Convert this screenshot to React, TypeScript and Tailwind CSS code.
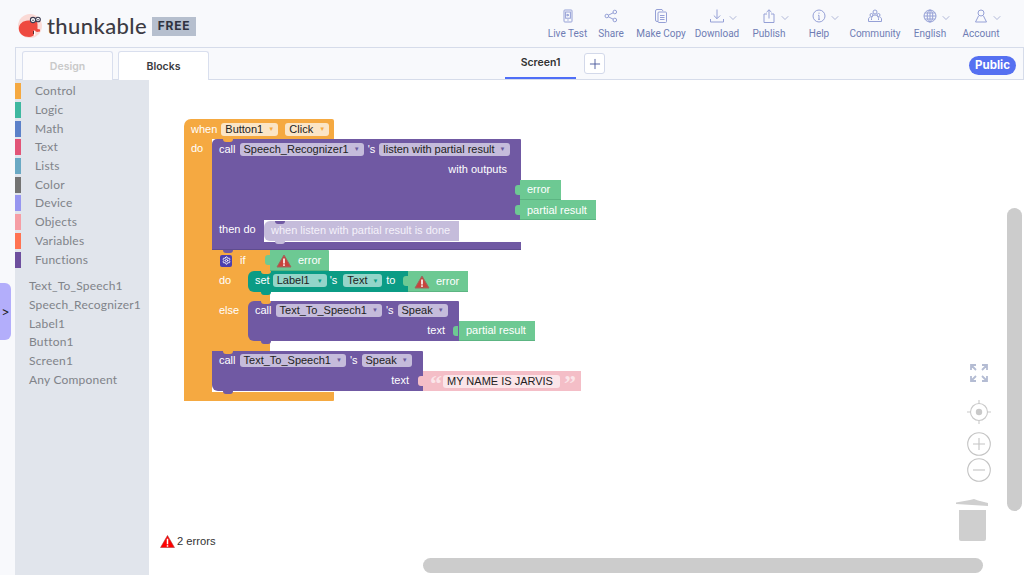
import { ChevronDown, Plus, Settings } from "lucide-react";
import type { ReactNode } from "react";

const navIcons: Record<string, ReactNode> = {
  "Live Test": (
    <>
      <rect x="3" y="1" width="8" height="12" rx="0.8" />
      <rect x="4.6" y="3" width="4.8" height="6.2" />
      <path d="M6 5.200l2 .9-2 .9zM6.300 11h1.400" />
    </>
  ),
  Share: (
    <>
      <circle cx="2.800" cy="7" r="1.800" />
      <circle cx="10.800" cy="3" r="1.800" />
      <circle cx="10.800" cy="11" r="1.800" />
      <path d="m4.400 6.200 4.800-2.400M4.400 7.800l4.800 2.400" />
    </>
  ),
  "Make Copy": (
    <>
      <path d="M4 12.500H3a1.500 1.500 0 0 1-1.500-1.500V2A1.500 1.500 0 0 1 3 .5h5l1 1.500" />
      <rect x="4" y="3" width="8.500" height="10.500" rx="1" />
      <path d="M6 6.500h4.500M6 8.500h4.500M6 10.500h4.500" />
    </>
  ),
  Download: <path d="M7 .5v9M3.800 6.500 7 9.700l3.200-3.200M.5 10v3h13v-3" />,
  Publish: <path d="M7 9.500V.8M4.500 3.200 7 .8l2.500 2.400M5 5H2v8.500h10V5H9" />,
  Help: (
    <>
      <circle cx="7" cy="7" r="6" />
      <path d="M7 6.300v4M6 6.300h1M6 10.300h2M7 3.600v1.200" />
    </>
  ),
  Community: (
    <>
      <circle cx="7" cy="3" r="2" />
      <circle cx="3.500" cy="6" r="1.500" />
      <circle cx="10.500" cy="6" r="1.500" />
      <path d="M3.500 11V9.500c0-2 1.500-3.500 3.500-3.500s3.500 1.500 3.500 3.500V11M.5 12.500V10c0-1 1-2 2-2M13.500 12.500V10c0-1-1-2-2-2M.5 12.500h13" />
    </>
  ),
  English: (
    <>
      <circle cx="7" cy="7" r="6" />
      <ellipse cx="7" cy="7" rx="2.800" ry="6" />
      <path d="M7 1v12M1 7h12M1.800 4h10.400M1.800 10h10.400" />
    </>
  ),
  Account: (
    <>
      <circle cx="7" cy="4" r="3" />
      <path d="M4.500 7 1.500 13h11l-3-6" />
    </>
  ),
};

const navItems = [
  { label: "Live Test", width: "w-[39px]" },
  { label: "Share", width: "w-[48px]" },
  { label: "Make Copy", width: "w-[52px]" },
  { label: "Download", width: "w-[60px]", menu: true },
  { label: "Publish", width: "w-[44px]", menu: true },
  { label: "Help", width: "w-[56px]", menu: true },
  { label: "Community", width: "w-[56px]" },
  { label: "English", width: "w-[54px]", menu: true },
  { label: "Account", width: "w-[48px]", menu: true },
];

const categories = [
  { name: "Control", color: "bg-[#f5a941]" },
  { name: "Logic", color: "bg-[#3fb8a0]" },
  { name: "Math", color: "bg-[#5c81c9]" },
  { name: "Text", color: "bg-[#e25578]" },
  { name: "Lists", color: "bg-[#6aa9c4]" },
  { name: "Color", color: "bg-[#737373]" },
  { name: "Device", color: "bg-[#9796f0]" },
  { name: "Objects", color: "bg-[#f69ea5]" },
  { name: "Variables", color: "bg-[#ff7352]" },
  { name: "Functions", color: "bg-[#6e4f9e]" },
];

const components = ["Text_To_Speech1", "Speech_Recognizer1", "Label1", "Button1", "Screen1", "Any Component"];

function Logo() {
  return (
    <svg width="24" height="24" viewBox="0 0 24 24">
      <circle cx="12" cy="12" r="12" fill="#fadad6" />
      <path d="M.8 15C.8 10 5 6.500 10 6.500h6c2 0 3.500 1.500 3.500 4v4.500l2.500.5v2l-3 .5-2-1v2.500c-1 2-3 3.500-6 3.500-5.500 0-10.200-3.500-10.200-8.500z" fill="#ee4a40" />
      <path d="M16.500 16.500v5" stroke="#fff" strokeWidth="1.400" />
      <path d="M15.500 17v3" stroke="#5a2a2a" strokeWidth="1" />
      <circle cx="15" cy="6" r="2.600" fill="#fff" stroke="#3a3a50" strokeWidth="1.100" />
      <circle cx="20" cy="5.500" r="2.300" fill="#fff" stroke="#3a3a50" strokeWidth="1.100" />
      <circle cx="15" cy="6.200" r="0.800" fill="#3a3a50" />
      <circle cx="20" cy="5.700" r="0.800" fill="#3a3a50" />
    </svg>
  );
}

function Warning() {
  return (
    <svg viewBox="0 0 16 14" className="h-[14px] w-[16px] shrink-0">
      <path d="M8 1 15 13H1z" fill="#c9433c" stroke="#9a6a60" strokeWidth="1" strokeLinejoin="round" />
      <rect x="7.200" y="4.500" width="1.600" height="5" fill="#fff" />
      <rect x="7.200" y="10.300" width="1.600" height="1.600" fill="#fff" />
    </svg>
  );
}

function Field({ children, tone, arrow = true, className = "" }: { children: ReactNode; tone: "purple" | "orange" | "teal" | "pink"; arrow?: boolean; className?: string }) {
  const bg = { purple: "bg-[#c5bcdb]", orange: "bg-[#fbe5c6]", teal: "bg-[#93d5c9]", pink: "bg-[#fbe5e9]" }[tone];
  const arrowColor = { purple: "text-[#6a5a9c]", orange: "text-[#f5a941]", teal: "text-[#0b9c85]", pink: "" }[tone];
  return (
    <span className={`flex h-[13px] items-center justify-between gap-[5px] rounded-[3px] px-[4px] text-[#222] ${bg} ${className}`}>
      {children}
      {arrow && <span className={`text-[6px] leading-none ${arrowColor}`}>▼</span>}
    </span>
  );
}

// little tab on the left edge of a value block
function Tab({ className }: { className: string }) {
  return <span className={`absolute h-[10px] w-[5px] rounded-l-[3px] ${className}`} />;
}

// bump hanging under a statement block
function Bump({ className }: { className: string }) {
  return <span className={`absolute h-[3px] w-[10px] rounded-b-[5px] ${className}`} />;
}

function Blocks() {
  return (
    <div className="font-['Liberation_Sans',sans-serif] text-[11px] leading-none text-white">
      {/* when Button1 Click */}
      <div className="absolute left-[35px] top-[39px] flex h-[20px] w-[150px] items-center gap-[4px] rounded-t-[7px] rounded-tr-[2px] bg-[#f5a941] pl-[7px]">
        when
        <Field tone="orange" className="w-[57px]">Button1</Field>
        <Field tone="orange" className="ml-[3px] w-[44px]">Click</Field>
      </div>
      <div className="absolute left-[35px] top-[59px] h-[262px] w-[28px] bg-[#f5a941] pl-[7px] pt-[4px]">do</div>
      <div className="absolute left-[35px] top-[312px] h-[9px] w-[150px] rounded-b-[7px] rounded-br-[1px] bg-[#f5a941]" />

      {/* call Speech_Recognizer1 */}
      <div className="absolute left-[63px] top-[59px] h-[81px] w-[309px] rounded-tl-[5px] rounded-tr-[1px] bg-[#7059a3]">
        <div className="flex h-[20px] items-center gap-[4px] pl-[7px]">
          call
          <Field tone="purple">Speech_Recognizer1</Field>
          's
          <Field tone="purple">listen with partial result</Field>
        </div>
        <div className="pr-[14px] text-right leading-[20px]">with outputs</div>
      </div>
      <Bump className="left-[74px] top-[59px] bg-[#f5a941]" />
      <div className="absolute left-[63px] top-[140px] flex h-[22px] w-[52px] items-start bg-[#7059a3] pl-[7px] pt-[4px]">then&nbsp;do</div>
      <div className="absolute left-[63px] top-[162px] h-[8px] w-[309px] bg-[#7059a3] shadow-[inset_0_-1px_0_#5f4c8e]" />
      <div className="absolute left-[115px] top-[141px] flex h-[20px] w-[195px] items-center rounded-l-[6px] bg-[#c5bcdb] pb-[2px] pl-[7px] text-[#f4f1fa]">
        when listen with partial result is done
      </div>
      <Bump className="left-[126px] top-[141px] bg-[#7059a3]" />
      <Bump className="left-[126px] top-[161px] bg-[#c5bcdb]" />

      <div className="absolute left-[371px] top-[100px] flex h-[20px] w-[41px] items-center bg-[#6dc993] pb-[2px] pl-[7px] shadow-[inset_0_-1px_0_#5cb582]">error</div>
      <Tab className="left-[366px] top-[105px] bg-[#6dc993]" />
      <div className="absolute left-[371px] top-[120px] flex h-[20px] w-[76px] items-center bg-[#6dc993] pl-[7px] shadow-[inset_0_-1px_0_#5cb582]">partial result</div>
      <Tab className="left-[366px] top-[125px] bg-[#6dc993]" />

      {/* if / do / else */}
      <div className="absolute left-[63px] top-[170px] h-[101px] w-[58px] bg-[#f5a941]">
        <div className="flex h-[21px] items-center gap-[8px] pl-[8px]">
          <span className="flex h-[12px] w-[12px] items-center justify-center rounded-[2px] bg-[#4b3fb0]">
            <Settings className="h-[9px] w-[9px] text-white" strokeWidth={2.5} />
          </span>
          if
        </div>
        <div className="mt-[2px] pl-[7px] leading-[14px]">do</div>
        <div className="mt-[16px] pl-[7px] leading-[14px]">else</div>
      </div>
      <Bump className="left-[74px] top-[170px] bg-[#7059a3]" />
      <div className="absolute left-[121px] top-[170px] flex h-[21px] w-[59px] items-center gap-[6px] rounded-tr-[1px] bg-[#6dc993] pl-[6px] shadow-[inset_0_-1px_0_#5cb582]">
        <Warning />
        error
      </div>
      <Tab className="left-[116px] top-[175px] bg-[#6dc993]" />

      {/* set Label1's Text to error */}
      <div className="absolute left-[99px] top-[191px] flex h-[21px] w-[160px] items-center gap-[3px] rounded-l-[6px] bg-[#0b9c85] pb-[2px] pl-[7px]">
        set
        <Field tone="teal" className="w-[54px]">Label1</Field>
        <span className="mr-[3px]">'s</span>
        <Field tone="teal" className="w-[39px]">Text</Field>
        <span className="ml-px">to</span>
      </div>
      <Bump className="left-[112px] top-[191px] bg-[#f5a941]" />
      <Bump className="left-[112px] top-[212px] bg-[#0b9c85]" />
      <div className="absolute left-[259px] top-[191px] flex h-[21px] w-[60px] items-center gap-[6px] bg-[#6dc993] pl-[6px] shadow-[inset_0_-1px_0_#5cb582]">
        <Warning />
        error
      </div>
      <Tab className="left-[254px] top-[196px] bg-[#6dc993]" />

      {/* call Text_To_Speech1 Speak */}
      <div className="absolute left-[99px] top-[221px] h-[40px] w-[211px] rounded-l-[6px] rounded-tr-[1px] bg-[#7059a3]">
        <div className="flex h-[20px] items-center gap-[4px] pb-[2px] pl-[7px]">
          call
          <Field tone="purple">Text_To_Speech1</Field>
          <span>'s</span>
          <Field tone="purple">Speak</Field>
        </div>
        <div className="pr-[14px] text-right leading-[18px]">text</div>
      </div>
      <Bump className="left-[112px] top-[221px] bg-[#f5a941]" />
      <Bump className="left-[112px] top-[261px] bg-[#7059a3]" />
      <div className="absolute left-[310px] top-[241px] flex h-[20px] w-[76px] items-center bg-[#6dc993] pb-px pl-[7px] shadow-[inset_0_-1px_0_#5cb582]">partial result</div>
      <Tab className="left-[304px] top-[246px] bg-[#6dc993]" />

      <div className="absolute left-[63px] top-[271px] h-[40px] w-[211px] rounded-bl-[6px] rounded-tr-[1px] bg-[#7059a3]">
        <div className="flex h-[20px] items-center gap-[4px] pb-[2px] pl-[7px]">
          call
          <Field tone="purple">Text_To_Speech1</Field>
          <span>'s</span>
          <Field tone="purple">Speak</Field>
        </div>
        <div className="pr-[14px] text-right leading-[18px]">text</div>
      </div>
      <Bump className="left-[74px] top-[271px] bg-[#f5a941]" />
      <Bump className="left-[74px] top-[311px] bg-[#7059a3]" />
      <div className="absolute left-[274px] top-[291px] flex h-[20px] w-[158px] items-center bg-[#f4bec7] pl-[7px]">
        <span className="-mt-[6px] h-[14px] w-[13px] font-['Liberation_Serif',serif] text-[24px] font-bold leading-[24px] text-[#fbe5e9]">“</span>
        <Field tone="pink" arrow={false} className="w-[117px] whitespace-nowrap">MY NAME IS JARVIS</Field>
        <span className="-mt-[6px] ml-[4px] h-[14px] w-[13px] font-['Liberation_Serif',serif] text-[24px] font-bold leading-[24px] text-[#fbe5e9]">”</span>
      </div>
      <Tab className="left-[269px] top-[296px] bg-[#f4bec7]" />
    </div>
  );
}

export default function App() {
  return (
    <div className="flex h-[575px] w-[1024px] flex-col overflow-hidden bg-[#f8f9fc] font-['Inter',sans-serif]">
      <header className="flex h-[47px] shrink-0 items-start">
        <div className="ml-[18px] mt-[14px] flex items-center">
          <Logo />
          <span className="ml-[5px] font-['Lato',sans-serif] text-[22px] font-medium leading-[24px] tracking-[0.4px] text-[#3c3b44]">thunkable</span>
          <span className="ml-[5px] flex h-[19px] w-[44px] items-center justify-center bg-[#b6bfce] text-[12px] font-bold tracking-[0.8px] text-[#2f3340]">FREE</span>
        </div>
        <nav className="ml-auto mr-[19px] flex">
          {navItems.map((item) => (
            <div key={item.label} className={`relative flex shrink-0 flex-col items-center ${item.width}`}>
              <svg viewBox="0 0 14 14" fill="none" stroke="#95a0d6" strokeWidth="1" className="mt-[9px] h-[14px] w-[14px]">
                {navIcons[item.label]}
              </svg>
              {item.menu && <ChevronDown className="absolute left-[calc(50%+10px)] top-[12px] h-[12px] w-[12px] text-[#7f8cc0]" strokeWidth={1.2} />}
              <span className="mt-[4px] whitespace-nowrap font-['Roboto',sans-serif] text-[10px] leading-[14px] text-[#6f7db4]">{item.label}</span>
            </div>
          ))}
        </nav>
      </header>

      <div className="flex min-h-0 flex-1">
        <div className="w-[15px] shrink-0 pt-[236px]">
          <div className="flex h-[57px] w-[11px] items-center justify-center rounded-r-[6px] bg-[#b3aefb] text-[12px] leading-none text-[#222]">&gt;</div>
        </div>
        <div className="flex min-w-0 flex-1 flex-col">
          <div className="flex h-[33px] shrink-0 border-x border-y border-[#d6dcea] pl-[6px]">
            <div className="mt-[3px] flex h-[29px] w-[91px] items-center justify-center rounded-t-[3px] border border-b-0 border-[#d9dfee] bg-[#fbfbfd] pt-px text-[10.500px] font-semibold text-[#c9c9c9]">Design</div>
            <div className="ml-[5px] mt-[3px] flex h-[29px] w-[91px] items-center justify-center rounded-t-[3px] border border-b-0 border-[#d9dfee] bg-white pt-px text-[10.500px] font-semibold text-[#3a3a3f]">Blocks</div>
            <div className="ml-[296px] flex h-[31px] w-[71px] items-center justify-center border-b-2 border-[#4f6ef7] pt-px text-[10.500px] font-semibold text-[#333]">Screen1</div>
            <div className="ml-[8px] mt-[5px] flex h-[21px] w-[21px] items-center justify-center rounded-[3px] border border-[#d3d9ea] bg-white text-[#3f4f96]">
              <Plus className="h-[16px] w-[16px]" strokeWidth={1.300} />
            </div>
            <div className="ml-auto mr-[7px] mt-[8px] flex h-[19px] w-[47px] items-center justify-center rounded-full bg-[#5570f1] text-[11.500px] font-bold text-white">Public</div>
          </div>
          <div className="flex min-h-0 flex-1">
            <aside className="w-[134px] shrink-0 bg-[#e1e5ec] font-['Lato',sans-serif] text-[12px] tracking-[0.2px] text-[#808389]">
              <div className="pt-[2px]">
                {categories.map((c) => (
                  <div key={c.name} className="flex h-[18.700px] items-center">
                    <span className={`h-[16px] w-[6px] ${c.color}`} />
                    <span className="ml-[14px]">{c.name}</span>
                  </div>
                ))}
              </div>
              <div className="pl-[14px] pt-[8px]">
                {components.map((name) => (
                  <div key={name} className="flex h-[18.700px] items-center whitespace-nowrap">{name}</div>
                ))}
              </div>
            </aside>
            <main className="relative min-w-0 flex-1 overflow-hidden bg-white">
              <Blocks />
              <div className="absolute left-[11px] top-[453px] flex items-center gap-[2px] font-['Liberation_Sans',sans-serif] text-[11.200px] text-[#333]">
                <svg viewBox="0 0 16 14" className="h-[13px] w-[15px]">
                  <path d="M8 .5 15.500 13.500H.5z" fill="#f00" stroke="#a33" strokeWidth="0.6" />
                  <rect x="7.200" y="4" width="1.600" height="6" fill="#fff" />
                  <rect x="7.200" y="11" width="1.600" height="1.600" fill="#fff" />
                </svg>
                2 errors
              </div>
              <svg viewBox="0 0 20 20" className="absolute left-[820px] top-[283px] h-[20px] w-[20px]" fill="none" stroke="#b4bcd3" strokeWidth="1.800">
                <path d="M2 7V2h5M2 2l5 5M18 7V2h-5M18 2l-5 5M2 13v5h5M2 18l5-5M18 13v5h-5M18 18l-5-5" />
              </svg>
              <svg viewBox="0 0 26 26" className="absolute left-[817px] top-[319px] h-[26px] w-[26px]" fill="none" stroke="#c9c9c9" strokeWidth="1.100">
                <circle cx="13" cy="13" r="8.500" />
                <circle cx="13" cy="13" r="3.200" fill="#c9c9c9" stroke="none" />
                <path d="M13 1v3.500M13 21.500V25M1 13h3.500M21.500 13H25" />
              </svg>
              <svg viewBox="0 0 24 24" className="absolute left-[818px] top-[352px] h-[24px] w-[24px]" fill="none" stroke="#c4c4c4" strokeWidth="1.100">
                <circle cx="12" cy="12" r="11.300" />
                <path d="M6 12h12M12 6v12" />
              </svg>
              <svg viewBox="0 0 24 24" className="absolute left-[818px] top-[378px] h-[24px] w-[24px]" fill="none" stroke="#c4c4c4" strokeWidth="1.100">
                <circle cx="12" cy="12" r="11.300" />
                <path d="M6 12h12" />
              </svg>
              <svg viewBox="0 0 32 43" className="absolute left-[807px] top-[419px] h-[43px] w-[32px]" fill="#cfcfcf">
                <path d="M0 3.500 14 1l4-1 4 1.500L32 4v3L0 5z" />
                <path d="M3 11h27v29a2 2 0 0 1-2 2H5a2 2 0 0 1-2-2z" />
              </svg>
              <div className="absolute left-[858px] top-[128px] h-[303px] w-[15px] rounded-full bg-[#cccccc]" />
              <div className="absolute left-[274px] top-[478px] h-[15px] w-[560px] rounded-full bg-[#cccccc]" />
            </main>
          </div>
        </div>
      </div>
    </div>
  );
}
